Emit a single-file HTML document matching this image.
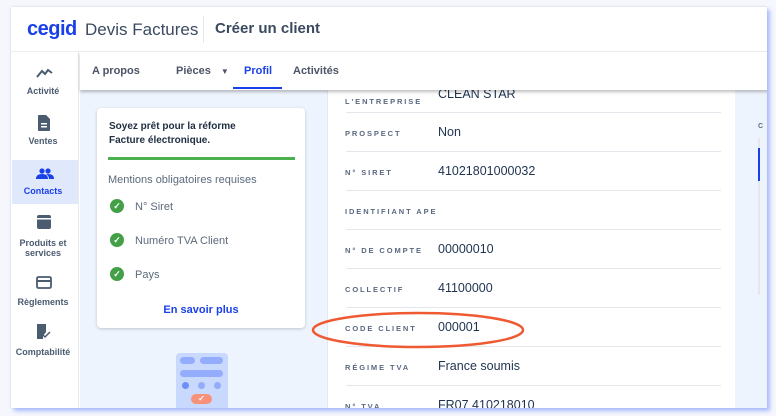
<!DOCTYPE html>
<html><head><meta charset="utf-8"><style>
*{margin:0;padding:0;box-sizing:border-box}
body{width:776px;height:416px;background:#f6f7fd;font-family:"Liberation Sans",sans-serif;position:relative;overflow:hidden;color:#2d3e55}
.win{position:absolute;left:11px;top:7px;width:756px;height:401px;background:#fff;overflow:hidden;box-shadow:3px 3px 4px #a9bcfb,0 0 2px #ccd}
.hdr{position:absolute;left:0;top:0;width:756px;height:45px;border-bottom:1px solid #eee;background:#fff}
.side{position:absolute;left:0;top:45px;width:68px;height:360px;background:#fff;border-right:1px solid #e6e9ef}
.si{position:absolute;left:0;width:64px;text-align:center;font-size:9px;font-weight:bold;color:#4b5b70;line-height:10px}
.main{position:absolute;left:69px;top:45px;width:690px;height:360px;background:#eef4fd}
.tabs{position:absolute;left:69px;top:45px;width:690px;height:38px;background:#fff;box-shadow:0 2px 3px rgba(0,0,0,.25);z-index:5}
.tab{position:absolute;top:13px;font-size:11px;font-weight:bold;color:#4b5566}
.card{position:absolute;left:86px;top:101px;width:208px;height:220px;background:#fff;border-radius:4px;box-shadow:0 1px 3px rgba(0,0,0,.2)}
.panel{position:absolute;left:316px;top:83px;width:408px;height:330px;background:#fff;border-left:1px solid #e3e7ee}
.row{position:absolute;left:18px;width:375px;border-top:1px solid #e3e6ea}
.lab{position:absolute;left:334px;font-size:7.5px;font-weight:bold;letter-spacing:1.9px;color:#5a6880}
.val{position:absolute;left:427px;font-size:12.5px;color:#1f3350}
.chk{position:absolute;left:13px;width:14px;height:14px;border-radius:50%;background:#43a047;color:#fff;font-size:9px;text-align:center;line-height:14px;font-weight:bold}
.ci{position:absolute;left:38px;font-size:11px;color:#5c6a7c}
</style></head><body>
<div class="win">
 <div class="hdr">
  <div style="position:absolute;left:16px;top:11px;font-size:20px;font-weight:bold;color:#1a40e8;letter-spacing:-.5px">cegid</div>
  <div style="position:absolute;left:74px;top:13px;font-size:17px;color:#3b4a60">Devis Factures</div>
  <div style="position:absolute;left:192px;top:9px;width:1px;height:27px;background:#e4e6ea"></div>
  <div style="position:absolute;left:204px;top:13px;font-size:15px;font-weight:bold;color:#3b4a60">Créer un client</div>
 </div>
 <div class="side">
  <svg style="position:absolute;left:25px;top:16px" width="17" height="10" viewBox="0 0 17 10"><path d="M1 9 L6 3 L9 6 L12 2 L16 5" fill="none" stroke="#4b5b70" stroke-width="2"/></svg>
  <div class="si" style="top:34px">Activité</div>
  <svg style="position:absolute;left:27px;top:63px" width="12" height="16" viewBox="0 0 12 16"><path d="M0 1Q0 0 1 0H8L12 4V15Q12 16 11 16H1Q0 16 0 15Z" fill="#4b5b70"/><rect x="3" y="8" width="6" height="1.5" fill="#fff"/><rect x="3" y="11" width="6" height="1.5" fill="#fff"/></svg>
  <div class="si" style="top:84px">Ventes</div>
  <div style="position:absolute;left:1px;top:108px;width:66px;height:44px;background:#e0e9fc"></div>
  <svg style="position:absolute;left:25px;top:116px" width="18" height="11" viewBox="0 0 18 11"><circle cx="6" cy="3" r="2.6" fill="#1a40e8"/><circle cx="12" cy="3" r="2.6" fill="#1a40e8"/><path d="M0 11Q0 6 6 6Q12 6 12 11Z M10 6.3Q18 5 18 11H13Q13 8 10 6.3Z" fill="#1a40e8"/></svg>
  <div class="si" style="top:134px;color:#1a40e8">Contacts</div>
  <svg style="position:absolute;left:26px;top:163px" width="14" height="14" viewBox="0 0 14 14"><rect x="0" y="0" width="14" height="14" rx="2" fill="#4b5b70"/><rect x="0" y="3" width="14" height="1.5" fill="#fff"/></svg>
  <div class="si" style="top:186px">Produits et<br>services</div>
  <svg style="position:absolute;left:25px;top:224px" width="16" height="13" viewBox="0 0 16 13"><rect x="1" y="1" width="14" height="11" rx="1.5" fill="none" stroke="#4b5b70" stroke-width="1.8"/><rect x="1" y="4" width="14" height="2" fill="#4b5b70"/></svg>
  <div class="si" style="top:245px">Règlements</div>
  <svg style="position:absolute;left:26px;top:272px" width="14" height="15" viewBox="0 0 14 15"><path d="M0 0H9V8L6 12V15H0Z" fill="#4b5b70"/><path d="M6 11L8 13L13 8" fill="none" stroke="#4b5b70" stroke-width="1.5"/></svg>
  <div class="si" style="top:295px">Comptabilité</div>
 </div>
 <div class="main"></div>
 <div class="tabs">
  <div class="tab" style="left:12px">A propos</div>
  <div class="tab" style="left:96px">Pièces <span style="font-size:8px;margin-left:7px">▼</span></div>
  <div class="tab" style="left:164px;color:#1a40e8">Profil</div>
  <div style="position:absolute;left:153px;top:35px;width:49px;height:2px;background:#1a40e8"></div>
  <div class="tab" style="left:213px">Activités</div>
 </div>
 <div class="card">
  <div style="position:absolute;left:12px;top:12px;font-size:10px;font-weight:bold;color:#1f2d40;line-height:14px">Soyez prêt pour la réforme<br>Facture électronique.</div>
  <div style="position:absolute;left:11px;top:49px;width:187px;height:3px;background:#4caf50"></div>
  <div style="position:absolute;left:11px;top:66px;font-size:11px;color:#5c6a7c">Mentions obligatoires requises</div>
  <div class="chk" style="top:91px">✓</div><div class="ci" style="top:93px">N° Siret</div>
  <div class="chk" style="top:125px">✓</div><div class="ci" style="top:127px">Numéro TVA Client</div>
  <div class="chk" style="top:159px">✓</div><div class="ci" style="top:161px">Pays</div>
  <div style="position:absolute;left:0;width:208px;top:196px;text-align:center;font-size:11px;font-weight:bold;color:#1a40e8">En savoir plus</div>
 </div>
 <div style="position:absolute;left:165px;top:346px;width:52px;height:60px;background:#c9d8fd;border-radius:4px">
  <div style="position:absolute;left:4px;top:4px;width:15px;height:7px;border-radius:4px;background:#93acfb"></div>
  <div style="position:absolute;left:24px;top:4px;width:23px;height:7px;border-radius:4px;background:#93acfb"></div>
  <div style="position:absolute;left:4px;top:17px;width:43px;height:7px;border-radius:4px;background:#93acfb"></div>
  <div style="position:absolute;left:6px;top:29px;width:7px;height:7px;border-radius:50%;background:#6f8ff8"></div>
  <div style="position:absolute;left:22px;top:29px;width:7px;height:7px;border-radius:50%;background:#93acfb"></div>
  <div style="position:absolute;left:38px;top:29px;width:7px;height:7px;border-radius:50%;background:#93acfb"></div>
  <div style="position:absolute;left:15px;top:41px;width:21px;height:10px;border-radius:5px;background:#f7917a;color:#fff;font-size:8px;text-align:center;line-height:10px;font-weight:bold">✓</div>
 </div>
 <div class="panel">
  <div class="row" style="top:22px"></div><div class="row" style="top:61px"></div><div class="row" style="top:100px"></div><div class="row" style="top:139px"></div><div class="row" style="top:178px"></div><div class="row" style="top:217px"></div><div class="row" style="top:256px"></div><div class="row" style="top:295px"></div>
 </div>
 <div style="position:absolute;left:747px;top:116px;font-size:7px;color:#5a6880;font-weight:bold">C</div>
 <div style="position:absolute;left:747px;top:131px;width:2px;height:157px;background:#e3e7ee"></div>
 <div style="position:absolute;left:747px;top:141px;width:2px;height:33px;background:#1a40e8"></div>
 <div class="val" style="top:80px">CLEAN STAR</div>
 <div class="lab" style="top:90px">L'ENTREPRISE</div>
 <div class="lab" style="top:122px">PROSPECT</div><div class="val" style="top:118px">Non</div>
 <div class="lab" style="top:161px">N° SIRET</div><div class="val" style="top:157px">41021801000032</div>
 <div class="lab" style="top:200px">IDENTIFIANT APE</div>
 <div class="lab" style="top:239px">N° DE COMPTE</div><div class="val" style="top:235px">00000010</div>
 <div class="lab" style="top:278px">COLLECTIF</div><div class="val" style="top:274px">41100000</div>
 <div class="lab" style="top:317px">CODE CLIENT</div><div class="val" style="top:313px">000001</div>
 <div class="lab" style="top:356px">RÉGIME TVA</div><div class="val" style="top:352px">France soumis</div>
 <div class="lab" style="top:395px">N° TVA</div><div class="val" style="top:391px">FR07 410218010</div>
</div>
<svg style="position:absolute;left:0;top:0" width="776" height="416"><ellipse cx="418" cy="330" rx="105" ry="17" fill="none" stroke="#ef5a32" stroke-width="2.5"/></svg>
</body></html>
